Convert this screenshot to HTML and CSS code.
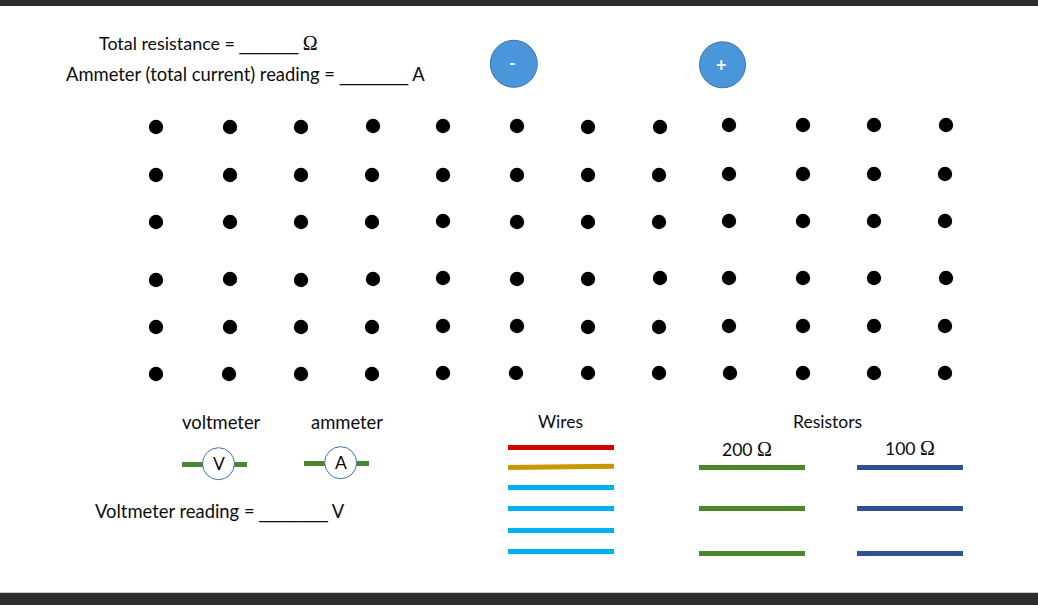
FILE: index.html
```html
<!DOCTYPE html>
<html lang="en">
<head>
<meta charset="utf-8">
<title>Circuit board</title>
<link rel="stylesheet" href="styles.css">
</head>
<body>
<div class="bar bar-top"></div>
<main class="slide">
  <svg class="canvas" width="1038" height="605" viewBox="0 6 1038 605" aria-hidden="true">
    <g class="dots">
      <circle cx="156" cy="127" r="7.5"/><circle cx="230" cy="127" r="7.5"/><circle cx="301" cy="127" r="7.5"/><circle cx="373" cy="126" r="7.5"/><circle cx="443" cy="126" r="7.5"/><circle cx="517" cy="126" r="7.5"/><circle cx="588" cy="127" r="7.5"/><circle cx="660" cy="127" r="7.5"/><circle cx="729" cy="125" r="7.5"/><circle cx="803" cy="125" r="7.5"/><circle cx="874" cy="125" r="7.5"/><circle cx="946" cy="125" r="7.5"/>
      <circle cx="156" cy="175" r="7.5"/><circle cx="230" cy="175" r="7.5"/><circle cx="301" cy="175" r="7.5"/><circle cx="372" cy="175" r="7.5"/><circle cx="443" cy="175" r="7.5"/><circle cx="517" cy="175" r="7.5"/><circle cx="588" cy="175" r="7.5"/><circle cx="659" cy="175" r="7.5"/><circle cx="729" cy="174" r="7.5"/><circle cx="803" cy="174" r="7.5"/><circle cx="874" cy="174" r="7.5"/><circle cx="945" cy="174" r="7.5"/>
      <circle cx="156" cy="222" r="7.5"/><circle cx="230" cy="222" r="7.5"/><circle cx="301" cy="222" r="7.5"/><circle cx="372" cy="222" r="7.5"/><circle cx="443" cy="221" r="7.5"/><circle cx="517" cy="222" r="7.5"/><circle cx="588" cy="222" r="7.5"/><circle cx="659" cy="222" r="7.5"/><circle cx="729" cy="221" r="7.5"/><circle cx="803" cy="221" r="7.5"/><circle cx="874" cy="221" r="7.5"/><circle cx="945" cy="221" r="7.5"/>
      <circle cx="156" cy="280" r="7.5"/><circle cx="230" cy="279" r="7.5"/><circle cx="301" cy="280" r="7.5"/><circle cx="373" cy="279" r="7.5"/><circle cx="443" cy="278" r="7.5"/><circle cx="517" cy="279" r="7.5"/><circle cx="588" cy="279" r="7.5"/><circle cx="660" cy="278" r="7.5"/><circle cx="729" cy="278" r="7.5"/><circle cx="803" cy="278" r="7.5"/><circle cx="874" cy="278" r="7.5"/><circle cx="946" cy="278" r="7.5"/>
      <circle cx="156" cy="327" r="7.5"/><circle cx="230" cy="327" r="7.5"/><circle cx="301" cy="327" r="7.5"/><circle cx="372" cy="327" r="7.5"/><circle cx="443" cy="326" r="7.5"/><circle cx="517" cy="326" r="7.5"/><circle cx="588" cy="327" r="7.5"/><circle cx="659" cy="327" r="7.5"/><circle cx="729" cy="326" r="7.5"/><circle cx="803" cy="326" r="7.5"/><circle cx="874" cy="326" r="7.5"/><circle cx="945" cy="326" r="7.5"/>
      <circle cx="156" cy="374" r="7.5"/><circle cx="229" cy="374" r="7.5"/><circle cx="301" cy="374" r="7.5"/><circle cx="372" cy="374" r="7.5"/><circle cx="443" cy="373" r="7.5"/><circle cx="516" cy="373" r="7.5"/><circle cx="588" cy="373" r="7.5"/><circle cx="659" cy="373" r="7.5"/><circle cx="730" cy="373" r="7.5"/><circle cx="803" cy="373" r="7.5"/><circle cx="874" cy="373" r="7.5"/><circle cx="945" cy="373" r="7.5"/>
    </g>
    <g class="btn"><circle cx="513.8" cy="63.8" r="23.5"/><circle cx="722.5" cy="64.8" r="23"/></g>
    <g class="wire">
      <line class="red" x1="508" y1="447.5" x2="614" y2="447.5"/>
      <line class="gold" x1="508" y1="467.6" x2="614" y2="466.2"/>
      <line class="cyan" x1="508" y1="487.5" x2="614" y2="487.5"/>
      <line class="cyan" x1="508" y1="508.5" x2="614" y2="508.5"/>
      <line class="cyan" x1="508" y1="530.5" x2="614" y2="530.5"/>
      <line class="cyan" x1="508" y1="551.5" x2="614" y2="551.5"/>
      <line class="green" x1="699" y1="467.5" x2="805" y2="467.5"/>
      <line class="green" x1="699" y1="508.5" x2="805" y2="508.5"/>
      <line class="green" x1="699" y1="553.5" x2="805" y2="553.5"/>
      <line class="navy" x1="857" y1="467.5" x2="963" y2="467.5"/>
      <line class="navy" x1="857" y1="508.5" x2="963" y2="508.5"/>
      <line class="navy" x1="857" y1="553.5" x2="963" y2="553.5"/>
      <line class="green" x1="182" y1="464.5" x2="247" y2="464.5"/>
      <line class="green" x1="304" y1="463.5" x2="369" y2="463.5"/>
    </g>
    <g class="meter"><circle cx="218.5" cy="463.7" r="16"/><circle cx="340.7" cy="462.7" r="16"/></g>
  </svg>

  <p class="label l-total">Total resistance = <span class="blank">______</span> <span class="omega">Ω</span></p>
  <p class="label wide l-ammeter">Ammeter (total current) reading = <span class="blank">_______</span> A</p>
  <span class="label btn-text l-minus">-</span>
  <span class="label btn-text l-plus">+</span>
  <span class="label wide l-volt">voltmeter</span>
  <span class="label wide l-amm">ammeter</span>
  <span class="label l-v">V</span>
  <span class="label l-a">A</span>
  <p class="label wide l-reading">Voltmeter reading = <span class="blank">_______</span> V</p>
  <span class="label l-wires">Wires</span>
  <span class="label l-res">Resistors</span>
  <span class="label l-200">200 <span class="omega">Ω</span></span>
  <span class="label l-100">100 <span class="omega">Ω</span></span>
</main>
<div class="bar bar-bottom"></div>
</body>
</html>
```
FILE: styles.css
```css
html, body {
  margin: 0;
  height: 100%;
  overflow: hidden;
}
body {
  display: flex;
  flex-direction: column;
  background: #fff;
  font-family: "Lato", "Liberation Sans", sans-serif;
  color: #0c0c0c;
}
.bar {
  background: #2d2d2d;
  flex: none;
}
.bar-top { height: 6px; }
.bar-bottom {
  height: 13px;
  border-top: 1px solid #c8c8c8;
  box-sizing: border-box;
}
.slide {
  position: relative;
  flex: 1;
  overflow: hidden;
}
.canvas {
  position: absolute;
  left: 0;
  top: 0;
}
.dots circle { fill: #000; r: 7.2px; }
.btn circle { fill: #4a96da; stroke: #3f74a3; stroke-width: 1; }
.meter circle { fill: #fff; stroke: #3f74a8; stroke-width: 1; }
.wire line { stroke-width: 5; }
.red { stroke: #d60000; }
.gold { stroke: #c59700; }
.cyan { stroke: #00b0f5; }
.green { stroke: #4a862c; }
.navy { stroke: #2f5197; }

.label {
  position: absolute;
  margin: 0;
  font-size: 17.5px;
  line-height: 22px;
  white-space: pre;
}
.wide { font-size: 18.4px; }
.l-total { font-size: 17.9px; }
.blank { font-family: "Liberation Sans", sans-serif; font-size: 17.6px; }
.omega { font-family: "Liberation Serif", serif; font-size: 20px; line-height: 20px; }
.btn-text { color: #fff; font-weight: 700; font-size: 18px; }
.l-total { left: 99px; top: 26px; }
.l-ammeter { left: 66px; top: 57px; }
.l-minus { left: 509px; top: 46px; }
.l-plus { left: 716px; top: 48px; }
.l-volt { left: 182px; top: 405px; }
.l-amm { left: 311px; top: 405px; }
.l-v { left: 213px; top: 447px; }
.l-a { left: 335px; top: 446px; }
.l-reading { left: 95px; top: 494px; }
.l-wires { left: 538px; top: 405px; }
.l-res { left: 793px; top: 405px; }
.l-200 { left: 722px; top: 433px; }
.l-100 { left: 885px; top: 432px; }
```
